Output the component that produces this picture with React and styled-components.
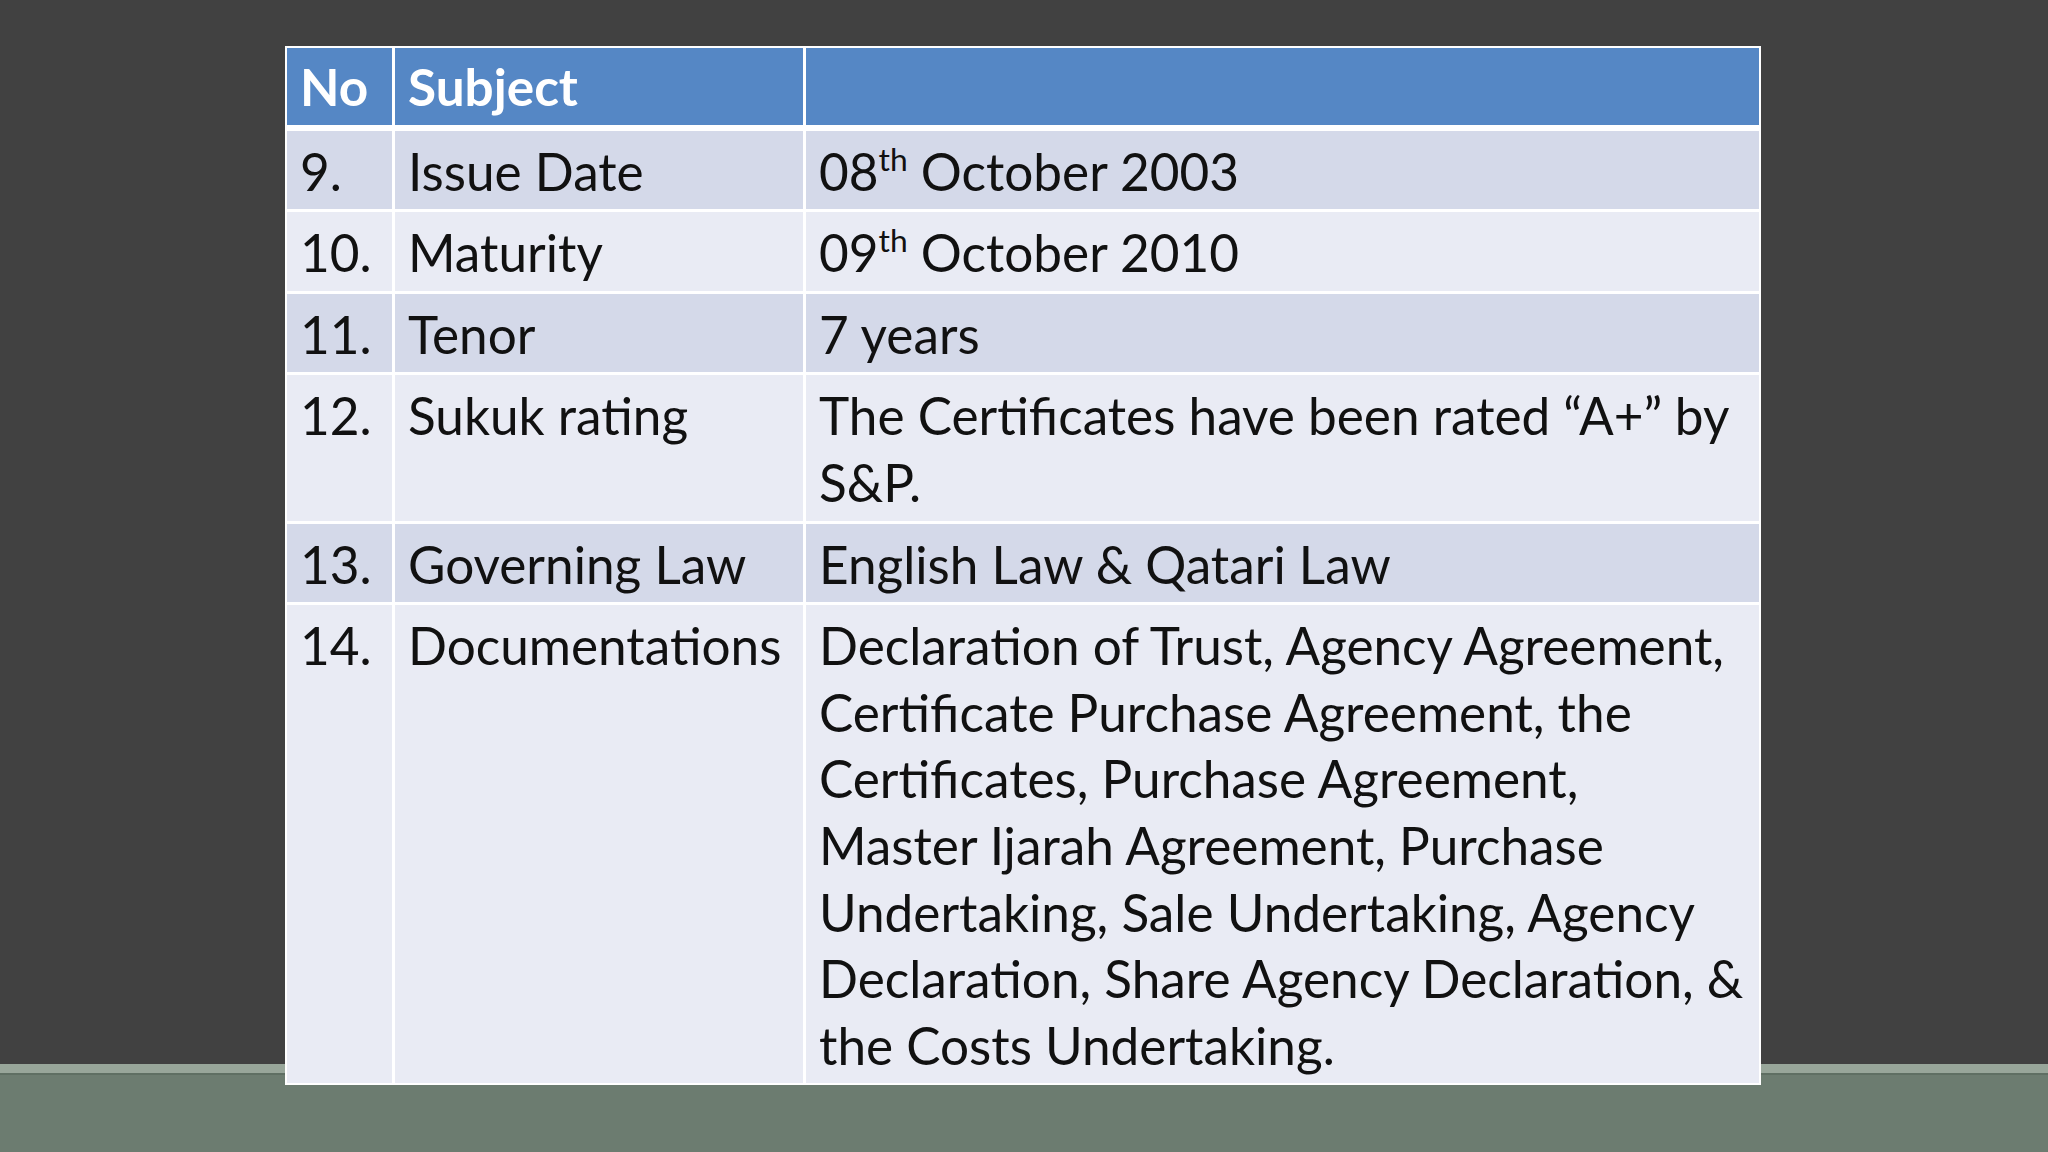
import React from 'react';
import styled, { createGlobalStyle } from 'styled-components';

const GlobalStyle = createGlobalStyle`
  html, body {
    margin: 0;
    padding: 0;
    background: #414141;
    overflow: hidden;
  }
`;

const Slide = styled.div`
  width: 2048px;
  height: 1152px;
  box-sizing: border-box;
  padding: 46px 0 0 285px;
  background: linear-gradient(
    to bottom,
    #414141 0,
    #414141 1064px,
    #98a69a 1064px,
    #98a69a 1073px,
    #5f6f63 1073px,
    #5f6f63 1075px,
    #6c7c70 1075px
  );
  font-family: 'Lato', 'Open Sans', sans-serif;
`;

const Table = styled.div`
  width: 1476px;
  box-sizing: border-box;
  background: #ffffff;
  padding: 2px;
  display: flex;
  flex-direction: column;
  gap: 3px;
`;

const Row = styled.div`
  display: grid;
  grid-template-columns: 105px 408px 1fr;
  gap: 3px;
  margin-bottom: ${p => (p.$head ? '3px' : '0')};
`;

const Cell = styled.div`
  background: ${p => p.$bg};
  color: ${p => (p.$head ? '#ffffff' : '#111111')};
  font-weight: ${p => (p.$head ? 700 : 400)};
  font-size: 51.3px;
  line-height: 66.6px;
  padding: ${p => (p.$head ? '5px 13px 5px' : '7px 13px 5px')};
  white-space: nowrap;
`;

const Line = styled.span`
  display: block;
`;

const Sup = styled.sup`
  font-size: 0.62em;
  line-height: 0;
  vertical-align: 0;
  position: relative;
  top: -0.62em;
`;

const HEAD = '#5587c5';
const DARK = '#d4d9e9';
const LIGHT = '#e9ebf4';

const rows = [
  { no: '9.', subject: 'Issue Date', lines: [<>08<Sup>th</Sup> October 2003</>] },
  { no: '10.', subject: 'Maturity', lines: [<>09<Sup>th</Sup> October 2010</>] },
  { no: '11.', subject: 'Tenor', lines: ['7 years'] },
  {
    no: '12.',
    subject: 'Sukuk rating',
    lines: ['The Certificates have been rated \u201CA+\u201D by', 'S&P.'],
  },
  { no: '13.', subject: 'Governing Law', lines: ['English Law & Qatari Law'] },
  {
    no: '14.',
    subject: 'Documentations',
    lines: [
      'Declaration of Trust, Agency Agreement,',
      'Certificate Purchase Agreement, the',
      'Certificates, Purchase Agreement,',
      'Master Ijarah Agreement, Purchase',
      'Undertaking, Sale Undertaking, Agency',
      'Declaration, Share Agency Declaration, &',
      'the Costs Undertaking.',
    ],
  },
];

export default function App() {
  return (
    <>
      <GlobalStyle />
      <Slide>
        <Table>
          <Row $head>
            <Cell $head $bg={HEAD}>No</Cell>
            <Cell $head $bg={HEAD}>Subject</Cell>
            <Cell $head $bg={HEAD}></Cell>
          </Row>
          {rows.map((r, i) => {
            const bg = i % 2 === 0 ? DARK : LIGHT;
            return (
              <Row key={r.no}>
                <Cell $bg={bg}>{r.no}</Cell>
                <Cell $bg={bg}>{r.subject}</Cell>
                <Cell $bg={bg}>
                  {r.lines.map((l, j) => (
                    <Line key={j}>{l}</Line>
                  ))}
                </Cell>
              </Row>
            );
          })}
        </Table>
      </Slide>
    </>
  );
}
